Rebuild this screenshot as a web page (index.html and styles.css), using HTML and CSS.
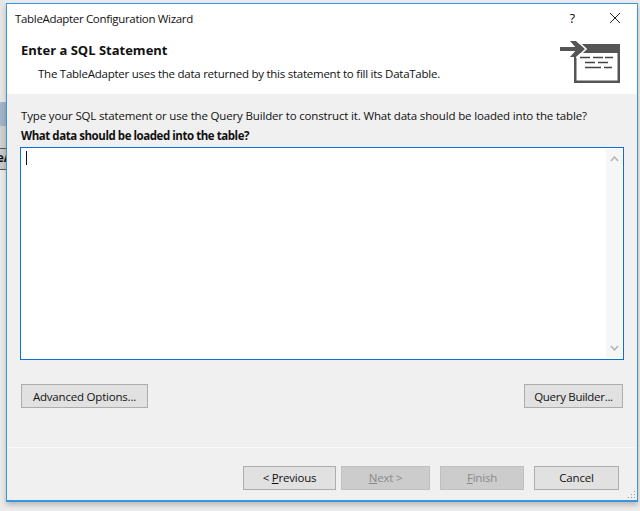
FILE: index.html
```html
<!DOCTYPE html>
<html lang="en">
<head>
<meta charset="utf-8">
<title>TableAdapter Configuration Wizard</title>
<link rel="stylesheet" href="styles.css">
</head>
<body>
<div class="desk">
  <div class="backdrop">
    <div class="bd-top"></div>
    <div class="bd-blue"></div>
    <div class="bd-gray"></div>
    <div class="bd-dark"><span>eA</span></div>
    <div class="bd-rest"></div>
  </div>
  <main class="window">
    <header class="top">
      <div class="titlebar">
        <span class="title">TableAdapter Configuration Wizard</span>
        <span class="help">?</span>
        <svg class="close" width="12" height="12" viewBox="0 0 12 12"><path d="M1 1l10 10M11 1L1 11" stroke="#222" stroke-width="1" fill="none"/></svg>
      </div>
      <div class="banner">
        <div class="banner-text">
          <h1>Enter a SQL Statement</h1>
          <p>The TableAdapter uses the data returned by this statement to fill its DataTable.</p>
        </div>
        <svg class="logo" width="60" height="42" viewBox="0 0 60 42">
          <path d="M20 3H60V42H14V16H16.500V39.500H57.500V12H20Z" fill="#555"/>
          <path d="M0 6H18V10H0Z" fill="#555"/>
          <path d="M10 0H16L25 8L16 16H10L17 8Z" fill="#555"/>
          <path d="M16.500 -1L26 8L16.500 17" fill="none" stroke="#fff" stroke-width="1.600"/>
          <path d="M20 16.500H30M33 16.500H43M45 16.500H53M25 21.500H35M38 21.500H48M25 26.500H41M44 26.500H52" stroke="#444" stroke-width="1.300" fill="none"/>
        </svg>
      </div>
    </header>
    <section class="body">
      <p class="intro">Type your SQL statement or use the Query Builder to construct it. What data should be loaded into the table?</p>
      <p class="label">What data should be loaded into the table?</p>
      <div class="editor">
        <span class="caret"></span>
        <div class="scroll">
          <svg width="9" height="6" viewBox="0 0 9 6"><path d="M1 5l3.500-4 3.500 4" stroke="#b4b4b4" stroke-width="1.500" fill="none"/></svg>
          <svg width="9" height="6" viewBox="0 0 9 6"><path d="M1 1l3.500 4 3.500-4" stroke="#b4b4b4" stroke-width="1.500" fill="none"/></svg>
        </div>
      </div>
      <div class="tools">
        <button class="btn adv">Advanced Options...</button>
        <button class="btn qb">Query Builder...</button>
      </div>
    </section>
    <footer class="foot">
      <button class="btn prev">&lt; <u>P</u>revious</button>
      <button class="btn next" disabled><u>N</u>ext &gt;</button>
      <button class="btn finish" disabled><u>F</u>inish</button>
      <button class="btn cancel">Cancel</button>
    </footer>
    <svg class="grip" width="8" height="8" viewBox="0 0 8 8"><path d="M6 0h1v1H6zM3 3h1v1H3zM6 3h1v1H6zM0 6h1v1H0zM3 6h1v1H3zM6 6h1v1H6z" fill="#9a9a9a"/></svg>
  </main>
</div>
</body>
</html>
```
FILE: styles.css
```css
* { box-sizing: border-box; }
html, body { margin: 0; padding: 0; }
body {
  width: 640px;
  height: 511px;
  overflow: hidden;
  background: #ececec;
  font-family: "Open Sans", "Noto Sans", sans-serif;
  font-size: 11.5px;
  color: #111;
}
.desk { display: flex; height: 511px; padding-top: 3px; }
.backdrop { width: 6px; margin-top: -3px; display: flex; flex-direction: column; flex: none; }
.bd-top { height: 102px; background: #e6e6e6; }
.bd-blue { height: 24px; background: #a3b4c8; }
.bd-gray { height: 22px; background: #d0d0d0; }
.bd-dark { height: 22px; background: #c8c8c8; overflow: hidden; border-top: 1px solid #555; border-bottom: 1px solid #555; line-height: 18px; font-weight: 700; }
.bd-dark span { display: block; margin-left: -3px; }
.bd-rest { flex: 1; background: #eaeaea; }
.window {
  position: relative;
  width: 632px;
  height: 499px;
  flex: none;
  border: 1px solid #3b94e0;
  border-bottom-width: 2px;
  background: #f0f0f0;
  box-shadow: 0 3px 5px rgba(0,0,0,.22);
  display: flex;
  flex-direction: column;
}
.top { background: #fff; height: 90px; flex: none; }
.titlebar { display: flex; align-items: center; height: 28px; padding: 0 16px 0 8px; }
.title { flex: 1; letter-spacing: -.32px; font-size: 11.5px; }
.help { margin-right: 34px; font-size: 13px; }
.banner { display: flex; justify-content: space-between; padding: 0 17px 0 14px; }
.banner-text { padding-top: 9px; }
h1 { margin: 0; font-size: 13px; font-weight: 700; line-height: 18px; }
.banner-text p { margin: 6px 0 0 17px; line-height: 17px; letter-spacing: -.25px; }
.logo { margin-top: 9px; }
.body { padding: 14px 13px 0 13px; flex: none; height: 354px; border-bottom: 1px solid #f8f8f8; }
.intro, .label { margin: 0; line-height: 16px; letter-spacing: -.16px; }
.intro { padding-left: 1px; }
.label { font-weight: 700; padding-left: 1px; margin-top: 4px; letter-spacing: -.45px; }
.editor {
  position: relative;
  height: 213px;
  margin-top: 3px;
  background: #fff;
  border: 1px solid #0a6fd6;
  width: 604px;
}
.caret { position: absolute; left: 5px; top: 3px; width: 1px; height: 14px; background: #111; }
.scroll {
  position: absolute;
  right: 1px;
  top: 1px;
  bottom: 1px;
  width: 16px;
  background: #f6f6f6;
  display: flex;
  flex-direction: column;
  justify-content: space-between;
  align-items: center;
  padding: 7px 0;
}
.tools { display: flex; justify-content: space-between; margin-top: 24px; padding: 0 1px; width: 604px; }
.btn {
  height: 24px;
  border: 1px solid #adadad;
  background: #e1e1e1;
  color: #111;
  font: inherit;
  padding: 0;
  letter-spacing: -.2px;
}
.btn:disabled { background: #cccccc; color: #8a8a8a; border-color: #bfbfbf; }
.adv { width: 127px; }
.qb { width: 99px; letter-spacing: -.3px; }
.foot { display: flex; padding: 18px 0 0 236px; }
.foot .btn { padding-bottom: 2px; }
.prev { width: 93px; margin-right: 5px; }
.next { width: 89px; margin-right: 10px; }
.finish { width: 84px; margin-right: 10px; }
.cancel { width: 85px; }
.grip { position: absolute; right: 1px; bottom: 1px; }
```
